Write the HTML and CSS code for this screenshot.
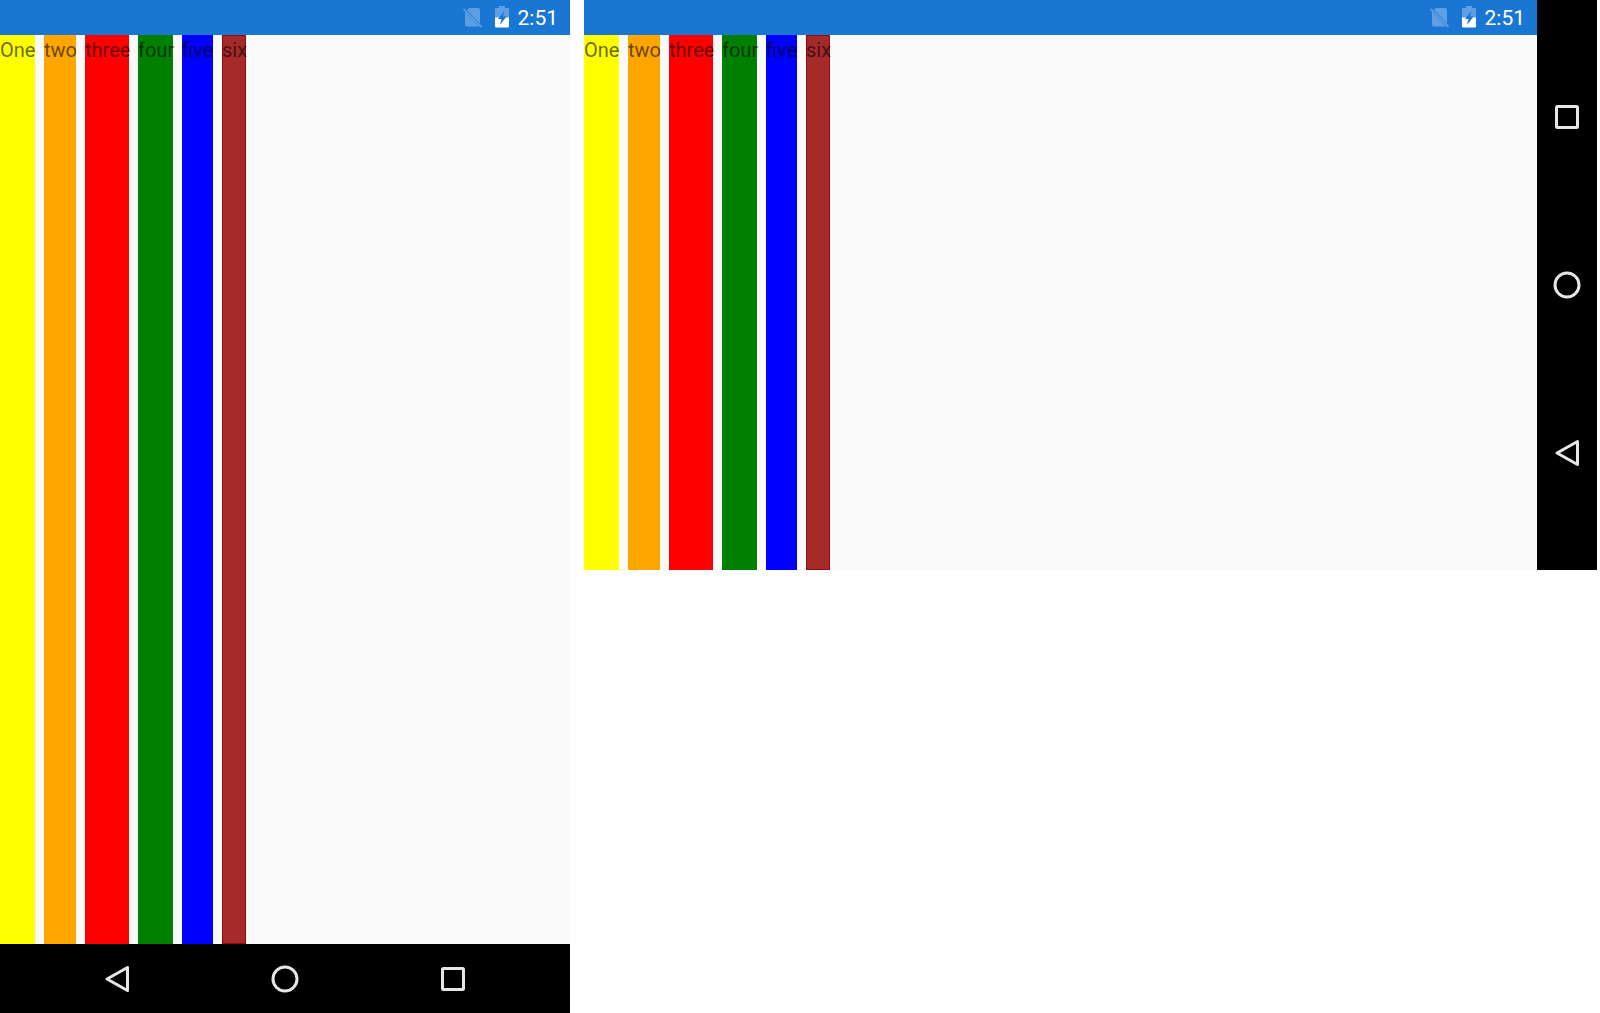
FILE: index.html
```html
<!DOCTYPE html>
<html lang="en">
<head>
<meta charset="utf-8">
<meta name="viewport" content="width=device-width, initial-scale=1">
<title>Stack layout</title>
<link rel="stylesheet" href="styles.css">
</head>
<body>
<svg class="defs" aria-hidden="true">
  <symbol id="no-sim" viewBox="0 0 20 20">
    <path d="M6 0H15Q17 0 17 2V15.500L4 2ZM2 4L16 18.500H4Q2 18.500 2 16.500Z" fill="#5f9fe1"/>
    <path d="M0.500 1L18.500 19" stroke="#5f9fe1" stroke-width="1.800" fill="none"/>
  </symbol>
  <symbol id="battery" viewBox="0 0 14 22">
    <path d="M4 0H10V2H13Q14 2 14 3V12H0V3Q0 2 1 2H4Z" fill="#5f9fe1"/>
    <path d="M0 11.500H14V20.500Q14 21.500 13 21.500H1Q0 21.500 0 20.500Z" fill="#fff"/>
    <path d="M9.500 5L3 13H6.500L5 19L11.500 10.500H8Z" fill="#1976d2"/>
  </symbol>
  <symbol id="back" viewBox="0 0 28 28">
    <path d="M24.500 2.500V25.500L4 14Z"/>
  </symbol>
  <symbol id="home" viewBox="0 0 28 28">
    <circle cx="14" cy="14" r="12"/>
  </symbol>
  <symbol id="recent" viewBox="0 0 28 28">
    <rect x="3.500" y="3.500" width="21" height="21" rx="1"/>
  </symbol>
</svg>
<main class="devices">
  <section class="device portrait" aria-label="Portrait">
    <div class="screen">
      <header class="status">
        <svg class="sim"><use href="#no-sim"/></svg>
        <svg class="battery"><use href="#battery"/></svg>
        <time class="clock">2:51</time>
      </header>
      <div class="stack">
        <span class="label yellow">One</span>
        <span class="label orange">two</span>
        <span class="label red">three</span>
        <span class="label green">four</span>
        <span class="label blue">five</span>
        <span class="label brown">six</span>
      </div>
    </div>
    <nav class="keys" aria-label="System">
      <button class="key" aria-label="Back"><svg><use href="#back"/></svg></button>
      <button class="key" aria-label="Home"><svg><use href="#home"/></svg></button>
      <button class="key" aria-label="Recent"><svg><use href="#recent"/></svg></button>
    </nav>
  </section>
  <section class="device landscape" aria-label="Landscape">
    <div class="screen">
      <header class="status">
        <svg class="sim"><use href="#no-sim"/></svg>
        <svg class="battery"><use href="#battery"/></svg>
        <time class="clock">2:51</time>
      </header>
      <div class="stack">
        <span class="label yellow">One</span>
        <span class="label orange">two</span>
        <span class="label red">three</span>
        <span class="label green">four</span>
        <span class="label blue">five</span>
        <span class="label brown">six</span>
      </div>
    </div>
    <nav class="keys" aria-label="System">
      <button class="key" aria-label="Recent"><svg><use href="#recent"/></svg></button>
      <button class="key" aria-label="Home"><svg><use href="#home"/></svg></button>
      <button class="key" aria-label="Back"><svg><use href="#back"/></svg></button>
    </nav>
  </section>
</main>
</body>
</html>
```
FILE: styles.css
```css
* {
  box-sizing: border-box;
}

body {
  margin: 0;
  background: #fff;
  font-family: Roboto, "Liberation Sans", sans-serif;
  font-size: 20px;
}

.defs {
  display: none;
}

.devices {
  display: grid;
  grid-template-columns: 570fr 1013fr;
  align-items: start;
  gap: 14px;
  padding-right: 3px;
}

.device {
  display: flex;
  min-width: 0;
}

.portrait {
  flex-direction: column;
  aspect-ratio: 570 / 1013;
}

.landscape {
  aspect-ratio: 1013 / 570;
}

.screen {
  display: flex;
  flex: 1;
  flex-direction: column;
  min-width: 0;
  background: #fafafa;
}

.status {
  display: flex;
  align-items: flex-start;
  justify-content: flex-end;
  height: 35px;
  padding: 6px 12px 0 0;
  background: #1976d2;
  color: #fff;
}

.sim {
  width: 20px;
  height: 20px;
  margin: 2px 12px 0 0;
}

.battery {
  width: 14px;
  height: 22px;
  margin-right: 9px;
}

.clock {
  font-size: 21px;
  line-height: 24px;
}

.stack {
  display: grid;
  flex: 1;
  grid-template-columns: 35px 32px 44px 35px 31px 24px;
  gap: 9px;
}

.label {
  line-height: 30px;
  color: rgba(0, 0, 0, 0.6);
  white-space: nowrap;
}

.yellow { background: #ffff00; }
.orange { background: #ffa500; }
.red { background: #ff0000; }
.green { background: #008000; }
.blue { background: #0000ff; }

.brown {
  background: #a52a2a;
  box-shadow: inset 0 0 0 1px #960808;
}

.keys {
  display: flex;
  flex: none;
  align-items: center;
  justify-content: center;
  background: #000;
}

.portrait .keys {
  height: 69px;
}

.landscape .keys {
  flex-direction: column;
  width: 60px;
}

.key {
  display: flex;
  align-items: center;
  justify-content: center;
  padding: 0;
  border: 0;
  background: none;
}

.portrait .key {
  width: 168px;
  height: 100%;
}

.landscape .key {
  width: 100%;
  height: 168px;
}

.key svg {
  width: 28px;
  height: 28px;
  fill: none;
  stroke: #e6e6e6;
  stroke-width: 3;
  stroke-linejoin: round;
}
```
